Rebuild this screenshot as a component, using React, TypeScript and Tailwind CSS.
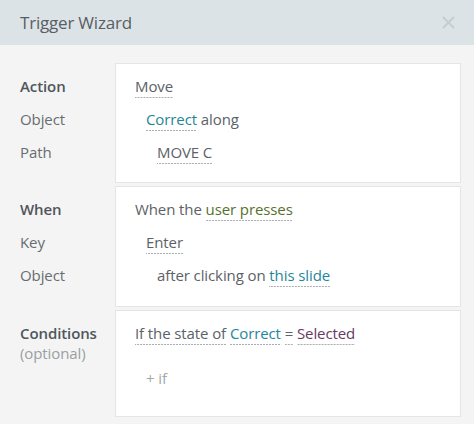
import React from 'react';

const dash =
  'bg-[linear-gradient(to_right,#a9aeb2_60%,transparent_60%)] bg-[length:3px_1px] bg-repeat-x bg-bottom pb-[2px]';

const Pick: React.FC<{ color?: string; children: React.ReactNode }> = ({ color, children }) => (
  <span className={`${dash} ${color ?? 'text-[#5c6267]'}`}>{children}</span>
);

const Row: React.FC<{ indent?: string; children: React.ReactNode }> = ({ indent, children }) => (
  <div className={`h-[33px] leading-[33px] whitespace-nowrap ${indent ?? ''}`}>{children}</div>
);

const Section: React.FC<{ labels: React.ReactNode; children: React.ReactNode; className?: string }> = (props) => (
  <div className="flex">
    <div className="w-[115px] shrink-0 pl-5 pt-[7px]">{props.labels}</div>
    <div
      className={`flex-1 mr-[13px] bg-white border border-[#e3e6e8] pl-[19px] pt-[6px] ${props.className ?? ''}`}
    >
      {props.children}
    </div>
  </div>
);

export default function App() {
  return (
    <div
      className="w-[474px] h-[426px] bg-white text-[15px] text-[#5c6267] tracking-[-0.1px]"
      style={{ fontFamily: '"Open Sans", "Noto Sans", sans-serif' }}
    >
      <div className="h-[424px] bg-[#f4f4f4]">
        <div className="h-[45px] bg-[#dce3e7] flex items-center justify-between pl-5 pr-[19px]">
          <span className="text-[17px] text-[#575e64] tracking-[-0.2px]">Trigger Wizard</span>
          <svg width="13" height="13" viewBox="0 0 13 13" className="mb-[1px]">
            <path d="M1.5 1.5 L11.5 11.5 M11.5 1.5 L1.5 11.5" stroke="#c6cdd1" strokeWidth="2" strokeLinecap="round" />
          </svg>
        </div>

        <div className="pt-[18px] flex flex-col gap-[3px]">
          <Section
            className="h-[120px]"
            labels={
              <>
                <Row><span className="font-semibold text-[#50565b]">Action</span></Row>
                <Row><span className="text-[#676d71]">Object</span></Row>
                <Row><span className="text-[#676d71]">Path</span></Row>
              </>
            }
          >
            <Row><Pick>Move</Pick></Row>
            <Row indent="pl-[11px]">
              <Pick color="text-[#1f8797]">Correct</Pick> along
            </Row>
            <Row indent="pl-[22px]"><Pick>MOVE C</Pick></Row>
          </Section>

          <Section
            className="h-[121px]"
            labels={
              <>
                <Row><span className="font-semibold text-[#50565b]">When</span></Row>
                <Row><span className="text-[#676d71]">Key</span></Row>
                <Row><span className="text-[#676d71]">Object</span></Row>
              </>
            }
          >
            <Row>
              When the <Pick color="text-[#56712d]">user presses</Pick>
            </Row>
            <Row indent="pl-[11px]"><Pick>Enter</Pick></Row>
            <Row indent="pl-[22px]">
              after clicking on <Pick color="text-[#1f8797]">this slide</Pick>
            </Row>
          </Section>

          <Section
            className="h-[107px]"
            labels={
              <>
                <div className="h-[26px] leading-[33px] font-semibold text-[#50565b]">Conditions</div>
                <div className="leading-[20px] text-[#9a9fa3]">(optional)</div>
              </>
            }
          >
            <Row>
              <Pick>If the state of</Pick> <Pick color="text-[#1f8797]">Correct</Pick> <Pick>=</Pick>{' '}
              <Pick color="text-[#673a63]">Selected</Pick>
            </Row>
            <div className="pl-[11px] mt-[12px] h-[33px] leading-[33px] text-[#a3a8ab]">+ if</div>
          </Section>
        </div>
      </div>
    </div>
  );
}
